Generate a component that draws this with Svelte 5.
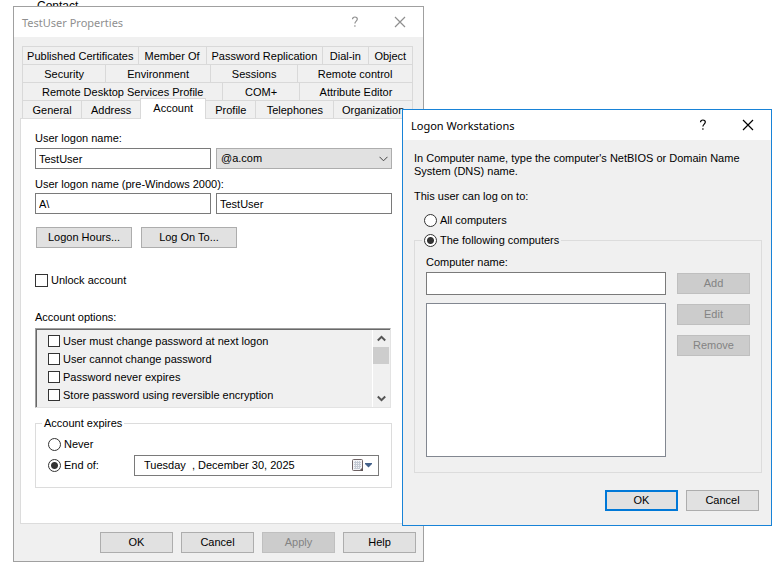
<script>
    const tabRows = [
        [
            { name: 'Published Certificates', size: 116 },
            { name: 'Member Of', size: 68 },
            { name: 'Password Replication', size: 117 },
            { name: 'Dial-in', size: 45 },
            { name: 'Object', size: 44 }
        ],
        [
            { name: 'Security', size: 83 },
            { name: 'Environment', size: 105 },
            { name: 'Sessions', size: 87 },
            { name: 'Remote control', size: 115 }
        ],
        [
            { name: 'Remote Desktop Services Profile', size: 201 },
            { name: 'COM+', size: 76 },
            { name: 'Attribute Editor', size: 113 }
        ],
        [
            { name: 'General', size: 59 },
            { name: 'Address', size: 59 },
            { name: 'Account', size: 65 },
            { name: 'Profile', size: 50 },
            { name: 'Telephones', size: 78 },
            { name: 'Organization', size: 79 }
        ]
    ];

    let activeTab = $state('Account');
    let logonName = $state('TestUser');
    let oldLogonName = $state('TestUser');
    let domain = $state('@a.com');
    let unlock = $state(false);
    let expires = $state('end');
    let scope = $state('list');
    let computer = $state('');

    let options = $state([
        { text: 'User must change password at next logon', checked: false },
        { text: 'User cannot change password', checked: false },
        { text: 'Password never expires', checked: false },
        { text: 'Store password using reversible encryption', checked: false }
    ]);
</script>

{#snippet titleBar(text)}
    <header class="title-bar">
        <h1>{text}</h1>
        <button class="title-button" aria-label="Help">
            <svg width="8" height="12" viewBox="0 0 8 12">
                <path d="M1.5 3.2C1.6 1.7 2.6 1 3.9 1C5.3 1 6.3 1.8 6.3 3.1C6.3 5 3.9 5.2 3.9 7.6" />
                <path d="M3.9 9.3V10.7" />
            </svg>
        </button>
        <button class="title-button" aria-label="Close">
            <svg width="12" height="12" viewBox="0 0 12 12">
                <path d="M1 1L11 11M11 1L1 11" />
            </svg>
        </button>
    </header>
{/snippet}

<main class="desktop">
    <p class="behind">Contact</p>

    <section class="window properties">
        {@render titleBar('TestUser Properties')}

        <div class="tabs" role="tablist">
            {#each tabRows as row}
                <div class="tab-row">
                    {#each row as tab}
                        <button
                            class="tab"
                            class:active={activeTab === tab.name}
                            role="tab"
                            aria-selected={activeTab === tab.name}
                            style={`flex-grow: ${tab.size}`}
                            onclick={() => (activeTab = tab.name)}
                        >{tab.name}</button>
                    {/each}
                </div>
            {/each}
        </div>

        <div class="page">
            <label class="caption" for="logon">User logon name:</label>
            <div class="pair">
                <input id="logon" class="field" type="text" bind:value={logonName} />
                <div class="select">
                    <select bind:value={domain} aria-label="Domain">
                        <option>@a.com</option>
                    </select>
                    <svg width="9" height="6" viewBox="0 0 9 6">
                        <path d="M0.5 0.8L4.5 4.8L8.5 0.8" />
                    </svg>
                </div>
            </div>

            <label class="caption old" for="old-logon">User logon name (pre-Windows 2000):</label>
            <div class="pair">
                <input class="field" type="text" value="A\" readonly aria-label="Domain prefix" />
                <input id="old-logon" class="field" type="text" bind:value={oldLogonName} />
            </div>

            <div class="logon-buttons">
                <button class="button wide">Logon Hours...</button>
                <button class="button wide">Log On To...</button>
            </div>

            <label class="check unlock">
                <input type="checkbox" bind:checked={unlock} />
                Unlock account
            </label>

            <p class="caption">Account options:</p>
            <div class="options">
                <div class="option-list">
                    {#each options as option}
                        <label class="check">
                            <input type="checkbox" bind:checked={option.checked} />
                            {option.text}
                        </label>
                    {/each}
                </div>
                <div class="scrollbar">
                    <button aria-label="Scroll up">
                        <svg width="9" height="7" viewBox="0 0 9 7"><path d="M0.8 5.5L4.5 1.8L8.2 5.5" /></svg>
                    </button>
                    <div class="thumb"></div>
                    <button aria-label="Scroll down">
                        <svg width="9" height="7" viewBox="0 0 9 7"><path d="M0.8 1.5L4.5 5.2L8.2 1.5" /></svg>
                    </button>
                </div>
            </div>

            <fieldset class="group expires">
                <legend>Account expires</legend>
                <label class="check">
                    <input type="radio" value="never" bind:group={expires} />
                    Never
                </label>
                <div class="end-row">
                    <label class="check">
                        <input type="radio" value="end" bind:group={expires} />
                        End of:
                    </label>
                    <div class="date">
                        <input type="text" value="Tuesday  , December 30, 2025" aria-label="Expiry date" />
                        <button aria-label="Open calendar">
                            <svg width="21" height="13" viewBox="0 0 21 13">
                                <path d="M1.5 0.5H9.5Q10.5 0.5 10.5 1.5V9L8 11.5H1.5Q0.5 11.5 0.5 10.5V1.5Q0.5 0.5 1.5 0.5Z" fill="#f4f4f6" stroke="#6e6264" />
                                <path d="M2 3.5H9M2 5.5H9M2 7.5H9M2 9.5H7M3.5 2V10M5.5 2V10M7.5 2V10" stroke="#c4cad4" fill="none" />
                                <path d="M7.5 12L11 8.5V12Z" fill="#5e5456" />
                                <path d="M13 4H20V5L16.5 8.5L13 5Z" fill="#44618a" />
                            </svg>
                        </button>
                    </div>
                </div>
            </fieldset>
        </div>

        <footer class="actions">
            <button class="button">OK</button>
            <button class="button">Cancel</button>
            <button class="button" disabled>Apply</button>
            <button class="button">Help</button>
        </footer>
    </section>

    <section class="window workstations">
        {@render titleBar('Logon Workstations')}

        <div class="content">
            <p>In Computer name, type the computer's NetBIOS or Domain Name<br />System (DNS) name.</p>
            <p class="question">This user can log on to:</p>

            <label class="check all">
                <input type="radio" value="all" bind:group={scope} />
                All computers
            </label>

            <fieldset class="group computers">
                <legend>
                    <label class="check">
                        <input type="radio" value="list" bind:group={scope} />
                        The following computers
                    </label>
                </legend>
                <label class="caption" for="computer">Computer name:</label>
                <div class="computer-grid">
                    <div class="computer-fields">
                        <input id="computer" class="field" type="text" bind:value={computer} />
                        <select class="list" size="5" aria-label="Computers"></select>
                    </div>
                    <div class="computer-buttons">
                        <button class="button" disabled>Add</button>
                        <button class="button" disabled>Edit</button>
                        <button class="button" disabled>Remove</button>
                    </div>
                </div>
            </fieldset>
        </div>

        <footer class="actions">
            <button class="button default">OK</button>
            <button class="button">Cancel</button>
        </footer>
    </section>
</main>

<style>
    :global(body) {
        background: #fff;
    }

    .desktop {
        position: relative;
        min-height: 563px;
        overflow: hidden;
        color: #000;
        font-family: "Microsoft Sans Serif", "Liberation Sans", Arial, sans-serif;
        font-size: 11px;
        line-height: 13px;
    }

    .desktop * {
        box-sizing: border-box;
    }

    p {
        margin: 0;
    }

    button,
    input,
    select {
        margin: 0;
        padding: 0;
        border: none;
        border-radius: 0;
        outline: none;
        background: none;
        color: inherit;
        font: inherit;
    }

    svg {
        display: block;
        flex: none;
    }

    .behind {
        padding-left: 37px;
        font-size: 12px;
    }

    .window {
        position: absolute;
        display: flex;
        flex-direction: column;
        background: #f0f0f0;
        border: 1px solid #a0a0a0;
    }

    .properties {
        top: 6px;
        left: 13px;
        right: 359px;
    }

    .workstations {
        top: 109px;
        left: 402px;
        right: 11px;
        border-color: #1883d7;
    }

    /* title bar */
    .title-bar {
        display: flex;
        align-items: center;
        height: 30px;
        padding: 0 1px 0 8px;
        background: #fff;
    }

    .properties .title-bar {
        color: #8f8f8f;
    }

    h1 {
        flex: 1;
        margin: 0;
        font-family: "Segoe UI", "Noto Sans", "Open Sans", sans-serif;
        font-size: 11px;
        font-weight: 400;
    }

    .title-button {
        display: flex;
        align-items: center;
        justify-content: center;
        width: 45px;
        height: 30px;
    }

    .title-button svg {
        fill: none;
        stroke: currentColor;
        stroke-width: 1.2;
    }

    /* tabs */
    .tabs {
        margin: 9px 10px 0 8px;
    }

    .tab-row {
        display: flex;
        height: 18px;
        border-left: 1px solid #d9d9d9;
    }

    .tab {
        flex: 1 1 0;
        min-width: 0;
        padding-top: 1px;
        border: 1px solid #d9d9d9;
        border-width: 1px 1px 0 0;
        white-space: nowrap;
    }

    .tab.active {
        position: relative;
        height: 21px;
        margin: -2px 0 0 -1px;
        padding: 0 0 2px;
        border-left-width: 1px;
        background: #fff;
    }

    .page {
        margin: 0 8px 0 6px;
        padding: 13px 22px 35px 14px;
        background: #fff;
        border: 1px solid #dcdcdc;
    }

    .caption {
        display: block;
        height: 16px;
    }

    .caption.old {
        height: 15px;
        margin-top: 9px;
    }

    .pair {
        display: grid;
        grid-template-columns: 1fr 1fr;
        gap: 5px;
    }

    .field {
        width: 100%;
        min-width: 0;
        height: 21px;
        padding: 0 3px;
        background: #fff;
        border: 1px solid #7a7a7a;
    }

    .select {
        position: relative;
    }

    .select select {
        width: 100%;
        height: 21px;
        padding: 0 20px 0 4px;
        appearance: none;
        background: #e1e1e1;
        border: 1px solid #adadad;
    }

    .select svg {
        position: absolute;
        top: 8px;
        right: 4px;
        fill: none;
        stroke: #444;
        pointer-events: none;
    }

    .button {
        width: 73px;
        height: 21px;
        background: #e1e1e1;
        border: 1px solid #adadad;
    }

    .button.wide {
        width: 96px;
    }

    .button.default {
        border: 2px solid #0078d7;
    }

    .button:disabled {
        background: #ccc;
        border-color: #bfbfbf;
        color: #838383;
    }

    .logon-buttons {
        display: flex;
        gap: 9px;
        margin: 13px 0 26px 1px;
    }

    /* check boxes and radios */
    .check {
        display: flex;
        align-items: center;
        gap: 3px;
        height: 13px;
        white-space: nowrap;
    }

    .check input {
        flex: none;
        width: 13px;
        height: 13px;
        appearance: none;
        background: #fff;
        border: 1px solid #333;
    }

    .check input[type='checkbox']:checked {
        background: #333;
        box-shadow: inset 0 0 0 2px #fff;
    }

    .check input[type='radio'] {
        border-radius: 50%;
    }

    .check input[type='radio']:checked {
        background: radial-gradient(circle, #333 3px, #fff 4px);
    }

    .unlock {
        margin-bottom: 24px;
    }

    .options {
        display: flex;
        height: 80px;
        margin: 1px 1px 0 0;
        padding: 1px 0 0 1px;
        background: #f0f0f0;
        border: 1px solid;
        border-color: #a0a0a0 #e3e3e3 #e3e3e3 #a0a0a0;
        box-shadow: inset 1px 1px #696969;
    }

    .option-list {
        display: flex;
        flex: 1;
        flex-direction: column;
        gap: 5px;
        padding: 5px 0 0 11px;
        border-right: 1px solid #fff;
    }

    .option-list .check {
        align-items: flex-start;
    }

    .option-list input {
        width: 12px;
        height: 12px;
    }

    .scrollbar {
        display: flex;
        flex-direction: column;
        width: 17px;
    }

    .scrollbar button {
        display: flex;
        align-items: center;
        justify-content: center;
        height: 17px;
    }

    .scrollbar button:last-child {
        margin-top: auto;
    }

    .scrollbar svg {
        fill: none;
        stroke: #555;
        stroke-width: 2;
    }

    .thumb {
        height: 17px;
        margin-right: 1px;
        background: #cdcdcd;
    }

    .group {
        min-width: 0;
        margin: 0;
        border: 1px solid #dcdcdc;
    }

    .expires {
        margin-top: 9px;
        padding: 8px 12px 11px 12px;
    }

    .expires legend {
        margin-left: -6px;
        padding: 0 2px;
    }

    .end-row {
        display: flex;
        align-items: center;
        margin-top: 4px;
    }

    .end-row .check {
        width: 86px;
    }

    .date {
        display: flex;
        flex: 1;
        height: 21px;
        padding: 0 5px 0 9px;
        border: 1px solid #7a7a7a;
    }

    .date input {
        flex: 1;
        min-width: 0;
    }

    .date button {
        display: flex;
        align-items: center;
    }

    .actions {
        display: flex;
        justify-content: flex-end;
        gap: 8px;
        padding: 8px 7px;
    }

    /* logon workstations */
    .content {
        padding: 12px 9px 0 11px;
    }

    .question {
        margin: 12px 0 11px;
    }

    .all {
        margin-left: 10px;
    }

    .computers {
        margin-top: 7px;
        padding: 9px 11px 15px 11px;
    }

    .computers legend {
        margin-left: -4px;
        padding-right: 2px;
    }

    .computer-grid {
        display: flex;
        gap: 11px;
    }

    .computer-fields {
        display: flex;
        flex: 1;
        flex-direction: column;
        gap: 8px;
    }

    .computer-fields .field {
        height: 23px;
    }

    .list {
        width: 100%;
        height: 154px;
        background: #fff;
        border: 1px solid #828790;
    }

    .computer-buttons {
        display: flex;
        flex-direction: column;
        gap: 10px;
        padding-top: 1px;
    }

    .workstations .actions {
        padding: 17px 12px 14px;
    }
</style>
